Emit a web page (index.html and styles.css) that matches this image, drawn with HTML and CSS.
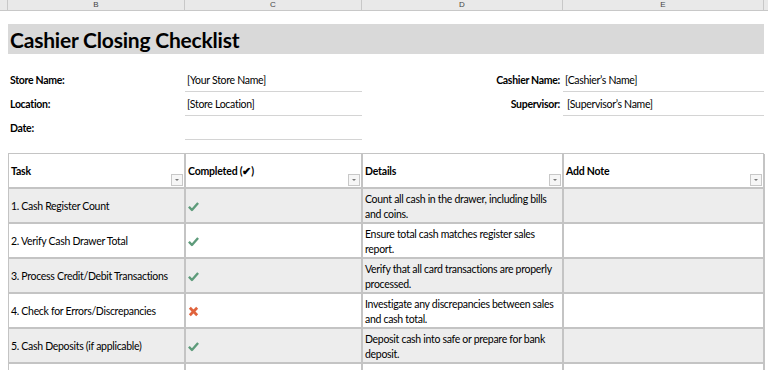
FILE: index.html
```html
<!DOCTYPE html>
<html lang="en">
<head>
  <meta charset="UTF-8">
  <title>Cashier Closing Checklist</title>
  <link rel="stylesheet" href="styles.css">
</head>
<body>
  <div class="colbar">
    <span></span>
    <span>B</span>
    <span>C</span>
    <span>D</span>
    <span>E</span>
    <span></span>
  </div>

  <div class="sheet">
    <h1 class="title">Cashier Closing Checklist</h1>

    <div class="info">
      <div class="label">Store Name:</div>
      <div class="value line">[Your Store Name]</div>
      <div class="label right">Cashier Name:</div>
      <div class="value line">[Cashier’s Name]</div>

      <div class="label">Location:</div>
      <div class="value line">[Store Location]</div>
      <div class="label right">Supervisor:</div>
      <div class="value line pad">[Supervisor’s Name]</div>

      <div class="label">Date:</div>
      <div class="value line"></div>
      <div></div>
      <div></div>
    </div>

    <div class="table">
      <div class="th">Task<span class="filter"></span></div>
      <div class="th">Completed (✔)<span class="filter"></span></div>
      <div class="th">Details<span class="filter"></span></div>
      <div class="th">Add Note<span class="filter"></span></div>

      <div class="td task odd">1. Cash Register Count</div>
      <div class="td mark odd"><svg class="ok" viewBox="0 0 12 12"><path d="M1 6.2 L4.3 9.8 L11 2.2"/></svg></div>
      <div class="td details odd">Count all cash in the drawer, including bills<br>and coins.</div>
      <div class="td odd"></div>

      <div class="td task">2. Verify Cash Drawer Total</div>
      <div class="td mark"><svg class="ok" viewBox="0 0 12 12"><path d="M1 6.2 L4.3 9.8 L11 2.2"/></svg></div>
      <div class="td details">Ensure total cash matches register sales<br>report.</div>
      <div class="td"></div>

      <div class="td task odd">3. Process Credit/Debit Transactions</div>
      <div class="td mark odd"><svg class="ok" viewBox="0 0 12 12"><path d="M1 6.2 L4.3 9.8 L11 2.2"/></svg></div>
      <div class="td details odd">Verify that all card transactions are properly<br>processed.</div>
      <div class="td odd"></div>

      <div class="td task">4. Check for Errors/Discrepancies</div>
      <div class="td mark"><svg class="bad" viewBox="0 0 12 12"><path d="M2 2 L10 10 M10 2 L2 10"/></svg></div>
      <div class="td details">Investigate any discrepancies between sales<br>and cash total.</div>
      <div class="td"></div>

      <div class="td task odd">5. Cash Deposits (if applicable)</div>
      <div class="td mark odd"><svg class="ok" viewBox="0 0 12 12"><path d="M1 6.2 L4.3 9.8 L11 2.2"/></svg></div>
      <div class="td details odd">Deposit cash into safe or prepare for bank<br>deposit.</div>
      <div class="td odd"></div>

      <div class="td task"></div>
      <div class="td mark"></div>
      <div class="td details"></div>
      <div class="td"></div>
    </div>
  </div>
</body>
</html>
```

FILE: styles.css
```css
body {
  margin: 0;
  background: #fff;
  font-family: Lato, "Open Sans", sans-serif;
  font-size: 11px;
  color: #000;
  overflow: hidden;
}
.colbar {
  display: grid;
  grid-template-columns: 8px 177px 177px 201px 201px 1fr;
  height: 10px;
  background: #e9e9e9;
  border-bottom: 1px solid #c8c8c8;
}
.colbar span {
  border-right: 1px solid #c8c8c8;
  text-align: center;
  font-size: 8px;
  line-height: 9px;
  color: #444;
  font-family: "Liberation Sans", sans-serif;
}
.colbar span:last-child {
  border-right: none;
}
.sheet {
  padding-left: 8px;
  width: 756px;
}
.title {
  margin: 13px 0 0;
  height: 30px;
  background: #d9d9d9;
  font-size: 21px;
  font-weight: bold;
  line-height: 32px;
  padding-left: 2px;
  letter-spacing: -0.2px;
}
.info {
  display: grid;
  grid-template-columns: 177px 177px 201px 201px;
  grid-auto-rows: 24px;
  margin-top: 14px;
}
.label {
  font-size: 10.5px;
  font-weight: bold;
  letter-spacing: -0.3px;
  padding: 6px 0 0 2px;
}
.label.right {
  text-align: right;
  padding-right: 3px;
}
.value {
  font-size: 10.5px;
  letter-spacing: -0.3px;
  padding: 6px 0 0 2px;
}
.value.pad {
  padding-left: 4px;
}
.line {
  border-bottom: 1px solid #d4d4d4;
  height: 17px;
}
.table {
  display: grid;
  grid-template-columns: 177px 177px 201px 201px;
  grid-auto-rows: 35px;
  margin-top: 13px;
  border-top: 1px solid #c4c4c4;
  border-left: 1px solid #c4c4c4;
}
.th, .td {
  border-right: 2px solid #c4c4c4;
  border-bottom: 2px solid #c4c4c4;
  padding: 0 2px;
  box-sizing: border-box;
}
.th {
  position: relative;
  font-weight: bold;
  font-size: 10.5px;
  letter-spacing: -0.2px;
  padding-top: 11px;
}
.filter {
  position: absolute;
  right: 1px;
  bottom: 1px;
  width: 10px;
  height: 10px;
  border: 1px solid #c8c8c8;
  background: #f6f6f6;
}
.filter::after {
  content: "";
  position: absolute;
  left: 3px;
  top: 4px;
  border-left: 2px solid transparent;
  border-right: 2px solid transparent;
  border-top: 2px solid #777;
}
.td {
  font-size: 10.5px;
  letter-spacing: -0.3px;
}
.odd {
  background: #ededed;
}
.task {
  display: flex;
  align-items: center;
}
.mark {
  display: flex;
  align-items: center;
}
.mark svg {
  width: 11px;
  height: 11px;
  fill: none;
  margin-top: 1px;
}
.ok {
  stroke: #5d9b7a;
  stroke-width: 2.6;
  stroke-linejoin: round;
}
.bad {
  stroke: #e0633c;
  stroke-width: 3;
}
.details {
  line-height: 15px;
  padding-top: 3px;
  white-space: nowrap;
}
```
